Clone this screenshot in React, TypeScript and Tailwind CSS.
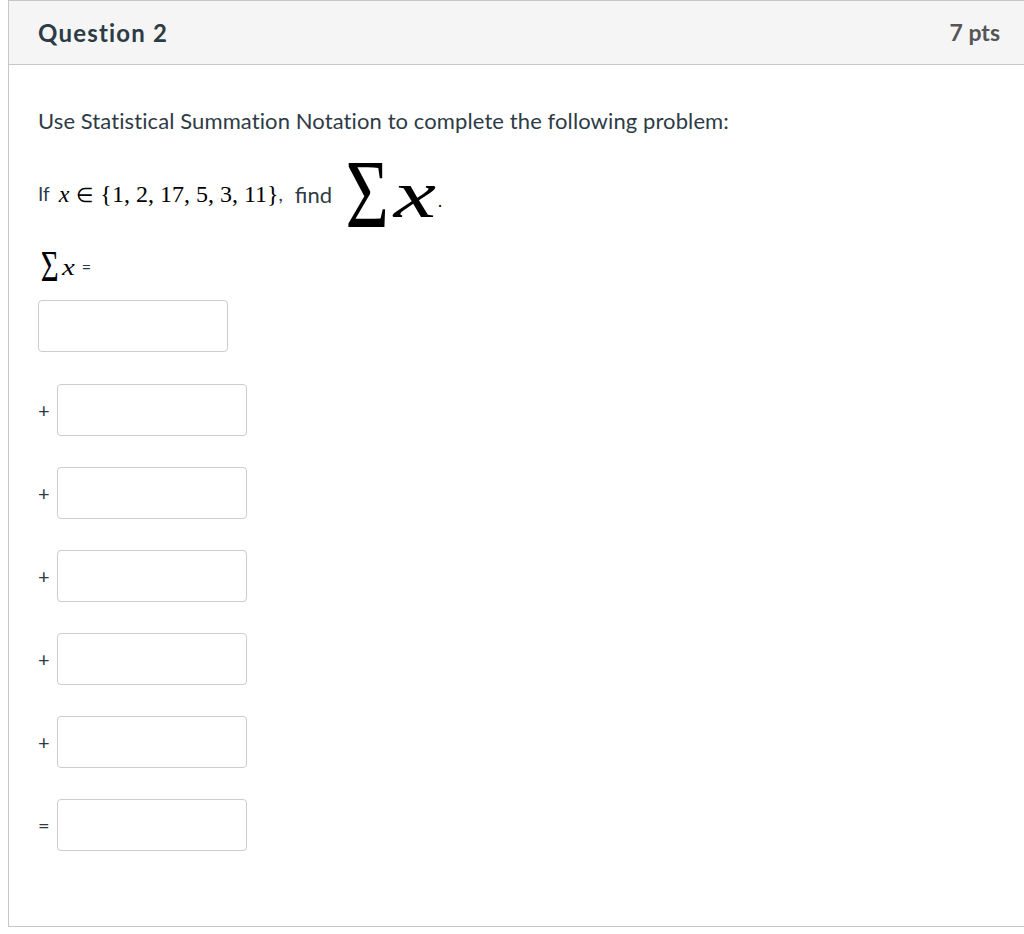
export default function App() {
  const rows = ["+", "+", "+", "+", "+", "="];
  return (
    <div className="min-h-[934px] bg-white pl-[8px]">
      <div className="h-[927px] border-l border-t border-b border-[#c7c7c7] font-['Lato',sans-serif] text-[#2d3b45]">
        <div className="flex h-[64px] items-center justify-between border-b border-[#c7c7c7] bg-[#f5f5f5] pl-[29px] pr-[24px]">
          <h2 className="text-[24px] font-bold tracking-[1.2px] text-[#2d3b45]">Question 2</h2>
          <span className="text-[23px] font-bold text-[#555]">7 pts</span>
        </div>

        <div className="pl-[29px] pt-[42px]">
          <p className="text-[22px] leading-[28px] tracking-[0.1px]">
            Use Statistical Summation Notation to complete the following problem:
          </p>

          <div className="mt-[26px] flex h-[66px] items-center text-[19px]">
            <span>If</span>
            <span className="ml-[9px] font-['Liberation_Serif',serif] text-[24px] text-black">
              <i>x</i>
              <span className="mx-[7px] text-[20px]">∈</span>
              {"{1, 2, 17, 5, 3, 11}"}
            </span>
            <span>,</span>
            <span className="ml-[12px] text-[22px]">find</span>
            <span className="ml-[8px] inline-block w-[46px] scale-x-[0.76] text-center font-['Liberation_Serif',serif] text-[98px] leading-[66px] text-black">
              Σ
            </span>
            <span className="ml-[6px] inline-block w-[46px] scale-x-[1.4] text-center font-['Liberation_Serif',serif] text-[68px] italic leading-none text-black">
              x
            </span>
            <span className="self-end pb-[14px] text-[17px] text-black">.</span>
          </div>

          <div className="mt-[26px] flex h-[28px] items-center">
            <span className="inline-block w-[18px] scale-x-[0.7] text-center font-['Liberation_Serif',serif] text-[44px] leading-[28px] text-black">
              Σ
            </span>
            <span className="ml-[7px] inline-block scale-x-[1.2] font-['Liberation_Serif',serif] text-[24px] italic leading-none text-black">
              x
            </span>
            <span className="ml-[8px] text-[16px]">=</span>
          </div>

          <div className="mt-[19px] h-[52px] w-[190px] rounded-[4px] border border-[#ccc] bg-white" />

          <div className="mt-[32px] flex flex-col gap-[31px]">
            {rows.map((r, i) => (
              <div key={i} className="flex items-center">
                <span className="w-[19px] text-[20px] leading-none text-[#2d3b45]">{r}</span>
                <div className="h-[52px] w-[190px] rounded-[4px] border border-[#ccc] bg-white" />
              </div>
            ))}
          </div>
        </div>
      </div>
    </div>
  );
}
